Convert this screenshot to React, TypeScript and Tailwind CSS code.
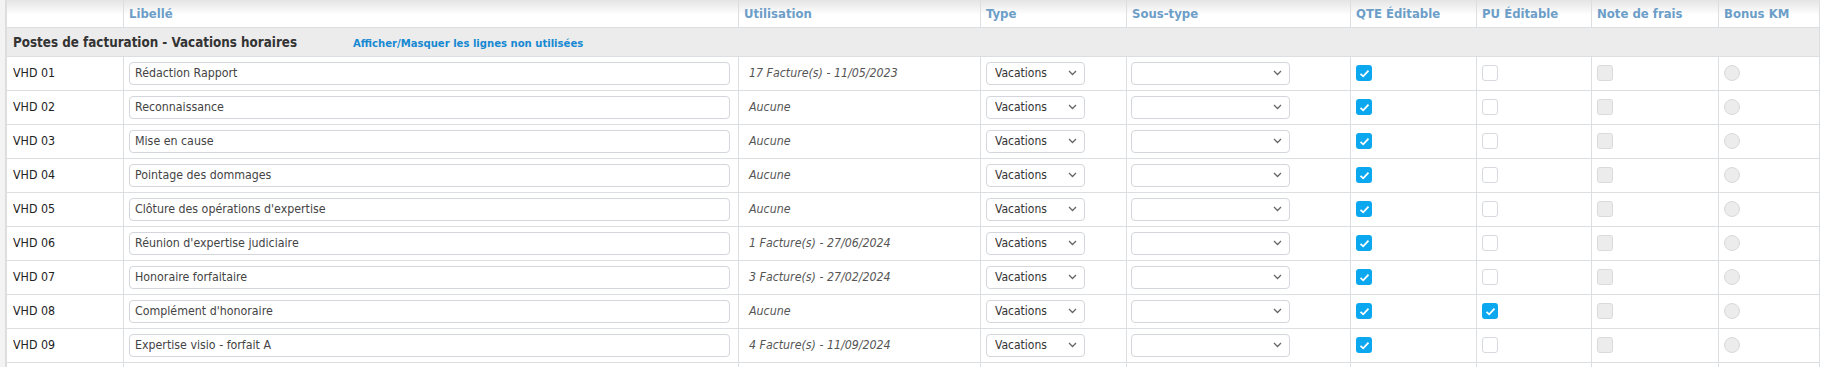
const rows = [
  { code: "VHD 01", label: "Rédaction Rapport", usage: "17 Facture(s) - 11/05/2023", pu: false },
  { code: "VHD 02", label: "Reconnaissance", usage: "Aucune", pu: false },
  { code: "VHD 03", label: "Mise en cause", usage: "Aucune", pu: false },
  { code: "VHD 04", label: "Pointage des dommages", usage: "Aucune", pu: false },
  { code: "VHD 05", label: "Clôture des opérations d'expertise", usage: "Aucune", pu: false },
  { code: "VHD 06", label: "Réunion d'expertise judiciaire", usage: "1 Facture(s) - 27/06/2024", pu: false },
  { code: "VHD 07", label: "Honoraire forfaitaire", usage: "3 Facture(s) - 27/02/2024", pu: false },
  { code: "VHD 08", label: "Complément d'honoraire", usage: "Aucune", pu: true },
  { code: "VHD 09", label: "Expertise visio - forfait A", usage: "4 Facture(s) - 11/09/2024", pu: false }
];

const headers = [
  "",
  "Libellé",
  "Utilisation",
  "Type",
  "Sous-type",
  "QTE Éditable",
  "PU Éditable",
  "Note de frais",
  "Bonus KM"
];

const Chevron = () => (
  <svg width="9" height="6" viewBox="0 0 9 6" className="shrink-0">
    <polyline points="1,1 4.5,4.5 8,1" fill="none" stroke="#666" strokeWidth="1.3" />
  </svg>
);

const Select = ({ value, width }: { value: string; width: string }) => (
  <div
    className={`${width} h-[23px] flex items-center justify-between pl-[8px] pr-[7px] bg-white border border-[#d3d6da] rounded-[4px] text-[12px] text-[#333]`}
  >
    <span>{value}</span>
    <Chevron />
  </div>
);

const Check = ({ checked }: { checked: boolean }) =>
  checked ? (
    <span className="w-[16px] h-[16px] rounded-[3px] bg-[#0ba8f0] flex items-center justify-center">
      <svg width="11" height="9" viewBox="0 0 11 9">
        <polyline points="1.5,4.8 4.2,7.3 9.5,1.6" fill="none" stroke="white" strokeWidth="1.8" />
      </svg>
    </span>
  ) : (
    <span className="w-[16px] h-[16px] rounded-[3px] bg-white border border-[#d6d9dd] block" />
  );

const cell = "p-0 border border-[#dcdfe2]";

export default function App() {
  return (
    <div className="w-[1825px] h-[367px] overflow-hidden bg-white flex font-[family-name:'DejaVu_Sans_Condensed','DejaVu_Sans',sans-serif]">
      <div className="w-[6px] shrink-0 bg-[#f3f3f3] border-r border-[#dcdcdc]" />
      <table className="table-fixed border-collapse w-[1813px] shrink-0 self-start">
        <colgroup>
          <col className="w-[117px]" />
          <col className="w-[615px]" />
          <col className="w-[242px]" />
          <col className="w-[146px]" />
          <col className="w-[224px]" />
          <col className="w-[126px]" />
          <col className="w-[115px]" />
          <col className="w-[127px]" />
          <col className="w-[101px]" />
        </colgroup>
        <thead>
          <tr className="h-[27px]">
            {headers.map((h, i) => (
              <th
                key={i}
                className="p-0 pl-[5px] text-left align-middle text-[13px] font-bold text-[#6c9ec8] border border-t-0 border-[#dcdfe2] bg-linear-to-b from-[#e4e4e4] to-white to-55%"
              >
                {h}
              </th>
            ))}
          </tr>
        </thead>
        <tbody>
          <tr className="h-[29px]">
            <td colSpan={9} className={`${cell} pl-[6px] bg-[#ececec] align-middle`}>
              <span className="text-[13.3px] font-bold text-[#333]">
                Postes de facturation - Vacations horaires
              </span>
              <span className="ml-[56px] text-[11.2px] font-bold text-[#1689d2]">
                Afficher/Masquer les lignes non utilisées
              </span>
            </td>
          </tr>
          {rows.map(({ code, label, usage, pu }) => (
            <tr key={code} className="h-[34px]">
              <td className={`${cell} pl-[6px] pt-[7px] align-top text-[12.3px] text-[#222]`}>
                {code}
              </td>
              <td className={`${cell} pl-[5px] align-middle`}>
                <div className="w-[601px] h-[23px] flex items-center pl-[5px] bg-white border border-[#d3d6da] rounded-[4px] text-[12.3px] text-[#444]">
                  {label}
                </div>
              </td>
              <td className={`${cell} pl-[10px] pt-[7px] align-top text-[12.3px] italic text-[#555]`}>
                {usage}
              </td>
              <td className={`${cell} pl-[5px] align-middle`}>
                <Select value="Vacations" width="w-[99px]" />
              </td>
              <td className={`${cell} pl-[4px] align-middle`}>
                <Select value="" width="w-[159px]" />
              </td>
              <td className={`${cell} pl-[5px] align-middle`}>
                <Check checked />
              </td>
              <td className={`${cell} pl-[5px] align-middle`}>
                <Check checked={pu} />
              </td>
              <td className={`${cell} pl-[5px] align-middle`}>
                <span className="w-[16px] h-[16px] rounded-[3px] bg-[#ececec] border border-[#dadada] block" />
              </td>
              <td className={`${cell} pl-[5px] align-middle`}>
                <span className="w-[16px] h-[16px] rounded-full bg-[#ececec] border border-[#dadada] block" />
              </td>
            </tr>
          ))}
          <tr className="h-[34px]">
            {headers.map((_, i) => (
              <td key={i} className={cell} />
            ))}
          </tr>
        </tbody>
      </table>
    </div>
  );
}
